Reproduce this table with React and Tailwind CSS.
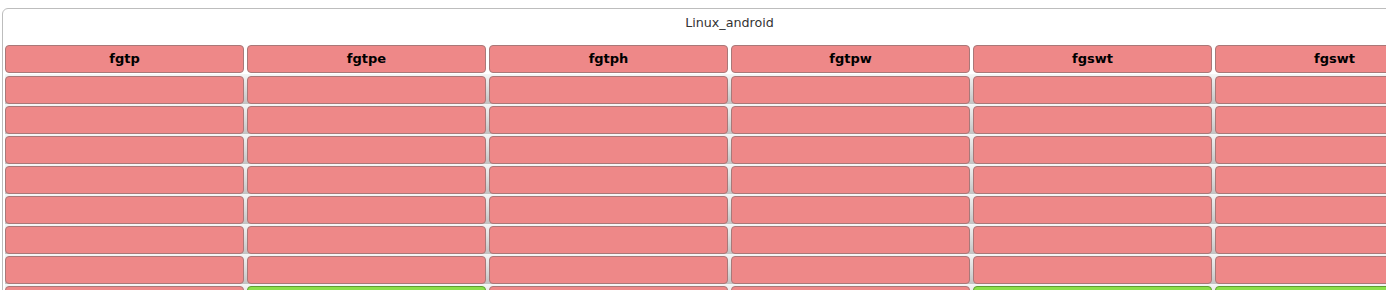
import React from "react";

const COLUMNS = ["fgtp", "fgtpe", "fgtph", "fgtpw", "fgswt", "fgswt"];

// 각 행의 상태 (true = 통과)
const ROWS = [
  [false, false, false, false, false, false],
  [false, false, false, false, false, false],
  [false, false, false, false, false, false],
  [false, false, false, false, false, false],
  [false, false, false, false, false, false],
  [false, false, false, false, false, false],
  [false, false, false, false, false, false],
  [false, true, false, false, true, true],
  [false, true, false, false, true, true],
];

const Cell = ({ ok, children }) => (
  <div
    className={`h-[28px] rounded-[4px] border flex items-center justify-center text-[13px] font-bold text-black ${
      ok ? "bg-[#8cde4c] border-[#5f9c34]" : "bg-[#ee8888] border-[#a97878]"
    }`}
  >
    {children}
  </div>
);

const App = () => {
  return (
    <div
      className="w-screen h-[290px] overflow-hidden bg-white"
      style={{ fontFamily: '"DejaVu Sans", sans-serif' }}
    >
      <div className="ml-[2px] mt-[8px] w-[1455px] border border-[#bdbdbd] rounded-tl-[6px] rounded-tr-[6px] px-[2px]">
        {/* 제목 */}
        <div className="h-[36px] pt-[6px] text-center text-[12.7px] leading-[16px] text-[#333]">
          Linux_android
        </div>

        {/* 헤더 */}
        <div className="grid grid-cols-[repeat(6,239px)] gap-[3px] mb-[1px]">
          {COLUMNS.map((c, i) => (
            <Cell key={i}>{c}</Cell>
          ))}
        </div>

        {/* 결과 행 */}
        {ROWS.map((row, r) => (
          <div
            key={r}
            className="grid grid-cols-[repeat(6,239px)] gap-[3px] pt-[2px] bg-gradient-to-b from-[#f6f6f6] to-[#c2c2c2]"
          >
            {row.map((ok, i) => (
              <Cell key={i} ok={ok} />
            ))}
          </div>
        ))}
      </div>
    </div>
  );
};

export default App;
